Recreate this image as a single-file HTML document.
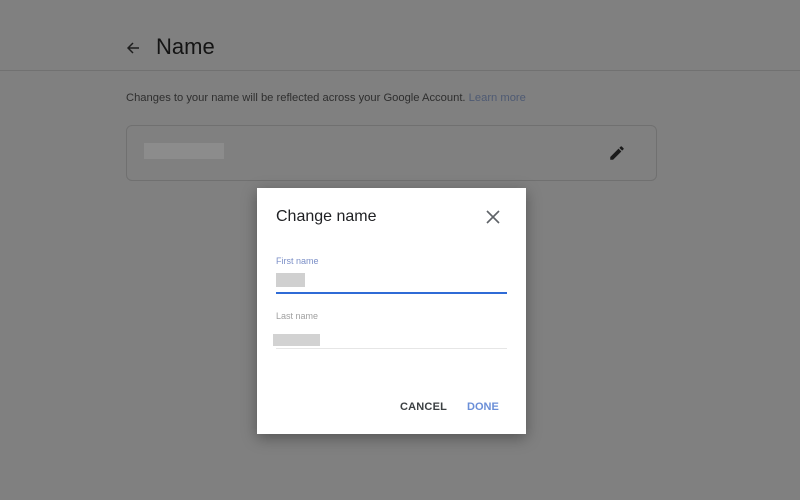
<!DOCTYPE html>
<html><head><style>
body{margin:0;width:800px;height:500px;background:#808080;font-family:"Liberation Sans",sans-serif;position:relative;overflow:hidden}
.abs{position:absolute}
</style></head><body>
<svg class="abs" style="left:125px;top:40px" width="16" height="16" viewBox="0 0 16 16"><path d="M14 8H3M8 3L3 8l5 5" stroke="#1e1e1e" stroke-width="1.5" fill="none"/></svg>
<div class="abs" style="left:156px;top:34px;font-size:22px;color:#141414">Name</div>
<div class="abs" style="left:0;top:70px;width:800px;height:1px;background:#717171"></div>
<div class="abs" style="left:126px;top:92px;font-size:11.2px;color:#2e2e2e">Changes to your name will be reflected across your Google Account. <span style="color:#4e5a73">Learn more</span></div>
<div class="abs" style="left:126px;top:125px;width:531px;height:56px;border:1px solid #707070;border-radius:6px;box-sizing:border-box"></div>
<div class="abs" style="left:144px;top:143px;width:80px;height:16px;background:#8c8c8c"></div>
<svg class="abs" style="left:608px;top:144px" width="18" height="18" viewBox="0 0 24 24"><path d="M3 17.25V21h3.75L17.8 9.94l-3.75-3.75L3 17.25zM20.7 7.04a1 1 0 000-1.41l-2.34-2.34a1 1 0 00-1.41 0l-1.83 1.83 3.75 3.75 1.83-1.83z" fill="#1a1a1a"/></svg>
<div class="abs" style="left:257px;top:188px;width:269px;height:246px;background:#fff;box-shadow:0 4px 14px rgba(0,0,0,.35)"></div>
<div class="abs" style="left:276px;top:208px;font-size:16px;color:#202124">Change name</div>
<svg class="abs" style="left:486px;top:210px" width="14" height="14" viewBox="0 0 14 14"><path d="M1 1L13 13M13 1L1 13" stroke="#5f6368" stroke-width="1.6"/></svg>
<div class="abs" style="left:276px;top:256px;font-size:9px;color:#7b8fc7">First name</div>
<div class="abs" style="left:276px;top:273px;width:29px;height:14px;background:#d0d0d0"></div>
<div class="abs" style="left:276px;top:292px;width:231px;height:2px;background:#2f6bd6"></div>
<div class="abs" style="left:276px;top:311px;font-size:9px;color:#a0a0a0">Last name</div>
<div class="abs" style="left:273px;top:334px;width:47px;height:12px;background:#d2d2d2"></div>
<div class="abs" style="left:276px;top:348px;width:231px;height:1px;background:#e6e6e6"></div>
<div class="abs" style="left:400px;top:401px;font-size:11px;color:#3c4043;font-weight:bold;letter-spacing:.2px">CANCEL</div>
<div class="abs" style="left:467px;top:401px;font-size:11px;color:#6b8fd8;font-weight:bold;letter-spacing:0">DONE</div>
</body></html>
